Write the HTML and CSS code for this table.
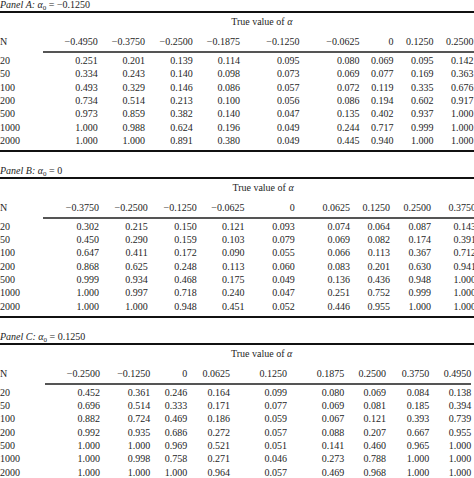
FILE: index.html
```html
<!DOCTYPE html>
<html lang="en">
<head>
<meta charset="utf-8">
<title>Power table</title>
<link rel="stylesheet" href="styles.css">
</head>
<body>
<div class="page">

<section class="panel">
  <div class="caption"><i>Panel A:</i> <i>α</i><sub>0</sub> = −0.1250</div>
  <table class="tbl pa">
    <colgroup><col><col><col><col><col><col><col><col><col><col></colgroup>
    <tr class="span"><td></td><td colspan="9" class="tv">True value of <i>α</i></td></tr>
    <tr class="head"><th>N</th><th>−0.4950</th><th>−0.3750</th><th>−0.2500</th><th>−0.1875</th><th>−0.1250</th><th>−0.0625</th><th>0</th><th>0.1250</th><th>0.2500</th></tr>
    <tr class="first"><td>20</td><td>0.251</td><td>0.201</td><td>0.139</td><td>0.114</td><td>0.095</td><td>0.080</td><td>0.069</td><td>0.095</td><td>0.142</td></tr>
    <tr><td>50</td><td>0.334</td><td>0.243</td><td>0.140</td><td>0.098</td><td>0.073</td><td>0.069</td><td>0.077</td><td>0.169</td><td>0.363</td></tr>
    <tr><td>100</td><td>0.493</td><td>0.329</td><td>0.146</td><td>0.086</td><td>0.057</td><td>0.072</td><td>0.119</td><td>0.335</td><td>0.676</td></tr>
    <tr><td>200</td><td>0.734</td><td>0.514</td><td>0.213</td><td>0.100</td><td>0.056</td><td>0.086</td><td>0.194</td><td>0.602</td><td>0.917</td></tr>
    <tr><td>500</td><td>0.973</td><td>0.859</td><td>0.382</td><td>0.140</td><td>0.047</td><td>0.135</td><td>0.402</td><td>0.937</td><td>1.000</td></tr>
    <tr><td>1000</td><td>1.000</td><td>0.988</td><td>0.624</td><td>0.196</td><td>0.049</td><td>0.244</td><td>0.717</td><td>0.999</td><td>1.000</td></tr>
    <tr class="last"><td>2000</td><td>1.000</td><td>1.000</td><td>0.891</td><td>0.380</td><td>0.049</td><td>0.445</td><td>0.940</td><td>1.000</td><td>1.000</td></tr>
  </table>
</section>

<section class="panel">
  <div class="caption"><i>Panel B:</i> <i>α</i><sub>0</sub> = 0</div>
  <table class="tbl pb">
    <colgroup><col><col><col><col><col><col><col><col><col><col></colgroup>
    <tr class="span"><td></td><td colspan="9" class="tv">True value of <i>α</i></td></tr>
    <tr class="head"><th>N</th><th>−0.3750</th><th>−0.2500</th><th>−0.1250</th><th>−0.0625</th><th>0</th><th>0.0625</th><th>0.1250</th><th>0.2500</th><th>0.3750</th></tr>
    <tr class="first"><td>20</td><td>0.302</td><td>0.215</td><td>0.150</td><td>0.121</td><td>0.093</td><td>0.074</td><td>0.064</td><td>0.087</td><td>0.143</td></tr>
    <tr><td>50</td><td>0.450</td><td>0.290</td><td>0.159</td><td>0.103</td><td>0.079</td><td>0.069</td><td>0.082</td><td>0.174</td><td>0.391</td></tr>
    <tr><td>100</td><td>0.647</td><td>0.411</td><td>0.172</td><td>0.090</td><td>0.055</td><td>0.066</td><td>0.113</td><td>0.367</td><td>0.712</td></tr>
    <tr><td>200</td><td>0.868</td><td>0.625</td><td>0.248</td><td>0.113</td><td>0.060</td><td>0.083</td><td>0.201</td><td>0.630</td><td>0.941</td></tr>
    <tr><td>500</td><td>0.999</td><td>0.934</td><td>0.468</td><td>0.175</td><td>0.049</td><td>0.136</td><td>0.436</td><td>0.948</td><td>1.000</td></tr>
    <tr><td>1000</td><td>1.000</td><td>0.997</td><td>0.718</td><td>0.240</td><td>0.047</td><td>0.251</td><td>0.752</td><td>0.999</td><td>1.000</td></tr>
    <tr class="last"><td>2000</td><td>1.000</td><td>1.000</td><td>0.948</td><td>0.451</td><td>0.052</td><td>0.446</td><td>0.955</td><td>1.000</td><td>1.000</td></tr>
  </table>
</section>

<section class="panel">
  <div class="caption"><i>Panel C:</i> <i>α</i><sub>0</sub> = 0.1250</div>
  <table class="tbl pc">
    <colgroup><col><col><col><col><col><col><col><col><col><col></colgroup>
    <tr class="span"><td></td><td colspan="9" class="tv">True value of <i>α</i></td></tr>
    <tr class="head"><th>N</th><th>−0.2500</th><th>−0.1250</th><th>0</th><th>0.0625</th><th>0.1250</th><th>0.1875</th><th>0.2500</th><th>0.3750</th><th>0.4950</th></tr>
    <tr class="first"><td>20</td><td>0.452</td><td>0.361</td><td>0.246</td><td>0.164</td><td>0.099</td><td>0.080</td><td>0.069</td><td>0.084</td><td>0.138</td></tr>
    <tr><td>50</td><td>0.696</td><td>0.514</td><td>0.333</td><td>0.171</td><td>0.077</td><td>0.069</td><td>0.081</td><td>0.185</td><td>0.394</td></tr>
    <tr><td>100</td><td>0.882</td><td>0.724</td><td>0.469</td><td>0.186</td><td>0.059</td><td>0.067</td><td>0.121</td><td>0.393</td><td>0.739</td></tr>
    <tr><td>200</td><td>0.992</td><td>0.935</td><td>0.686</td><td>0.272</td><td>0.057</td><td>0.088</td><td>0.207</td><td>0.667</td><td>0.955</td></tr>
    <tr><td>500</td><td>1.000</td><td>1.000</td><td>0.969</td><td>0.521</td><td>0.051</td><td>0.141</td><td>0.460</td><td>0.965</td><td>1.000</td></tr>
    <tr><td>1000</td><td>1.000</td><td>0.998</td><td>0.758</td><td>0.271</td><td>0.046</td><td>0.273</td><td>0.788</td><td>1.000</td><td>1.000</td></tr>
    <tr class="last"><td>2000</td><td>1.000</td><td>1.000</td><td>1.000</td><td>0.964</td><td>0.057</td><td>0.469</td><td>0.968</td><td>1.000</td><td>1.000</td></tr>
  </table>
</section>

</div>
</body>
</html>
```

FILE: styles.css
```css
html, body {
  margin: 0;
  padding: 0;
  background: #fff;
}
body {
  width: 474px;
  height: 478px;
  overflow: hidden;
  font-family: "Liberation Serif", "Times New Roman", serif;
  font-size: 10px;
  color: #1e1e1e;
}
.page {
  display: flex;
  flex-direction: column;
  gap: 14px;
}
.caption {
  height: 9px;
  line-height: 9px;
  padding-bottom: 2px;
  white-space: nowrap;
}
.caption sub {
  font-size: 7px;
  line-height: 0;
  vertical-align: -2px;
}
.tbl {
  border-collapse: separate;
  border-spacing: 0;
  table-layout: fixed;
  border-top: 2px solid #111;
  border-bottom: 2px solid #111;
  padding-right: 20px;
  font-size: 10px;
}
.tbl th, .tbl td {
  padding: 0;
  text-align: right;
  vertical-align: top;
  font-weight: normal;
  white-space: nowrap;
  line-height: 13.33px;
}
.tbl th:first-child, .tbl td:first-child {
  text-align: left;
}
.tbl .span td {
  padding: 3px 0 5px;
  line-height: 12px;
}
.tbl .span .tv {
  text-align: center;
  padding-left: 7px;
}
.tbl .head th {
  padding: 3px 0 3px;
  line-height: 12px;
}
.tbl .head th + th {
  border-bottom: 2px solid #555;
}
.tbl .head th:first-child {
  padding-bottom: 5px;
}
.tbl .first td {
  padding-top: 1px;
}
.tbl .last td {
  padding-bottom: 2.5px;
}

/* Panel A column widths */
.pa { width: 473.5px; }
.pa col:nth-child(1) { width: 43px; }
.pa col:nth-child(2) { width: 54.7px; }
.pa col:nth-child(3) { width: 47.3px; }
.pa col:nth-child(4) { width: 47.7px; }
.pa col:nth-child(5) { width: 47.3px; }
.pa col:nth-child(6) { width: 59.5px; }
.pa col:nth-child(7) { width: 60px; }
.pa col:nth-child(8) { width: 34px; }
.pa col:nth-child(9) { width: 40px; }
.pa col:nth-child(10) { width: 40px; }

/* Panel B column widths */
.pb { width: 476px; }
.pb col:nth-child(1) { width: 43px; }
.pb col:nth-child(2) { width: 56px; }
.pb col:nth-child(3) { width: 48.7px; }
.pb col:nth-child(4) { width: 49px; }
.pb col:nth-child(5) { width: 47.8px; }
.pb col:nth-child(6) { width: 50.2px; }
.pb col:nth-child(7) { width: 55.3px; }
.pb col:nth-child(8) { width: 40px; }
.pb col:nth-child(9) { width: 41px; }
.pb col:nth-child(10) { width: 45px; }

/* Panel C column widths */
.pc { width: 471.3px; }
.pc col:nth-child(1) { width: 45px; }
.pc col:nth-child(2) { width: 55px; }
.pc col:nth-child(3) { width: 50.3px; }
.pc col:nth-child(4) { width: 37px; }
.pc col:nth-child(5) { width: 42.7px; }
.pc col:nth-child(6) { width: 57px; }
.pc col:nth-child(7) { width: 57.3px; }
.pc col:nth-child(8) { width: 41.7px; }
.pc col:nth-child(9) { width: 43.3px; }
.pc col:nth-child(10) { width: 42px; }
```
